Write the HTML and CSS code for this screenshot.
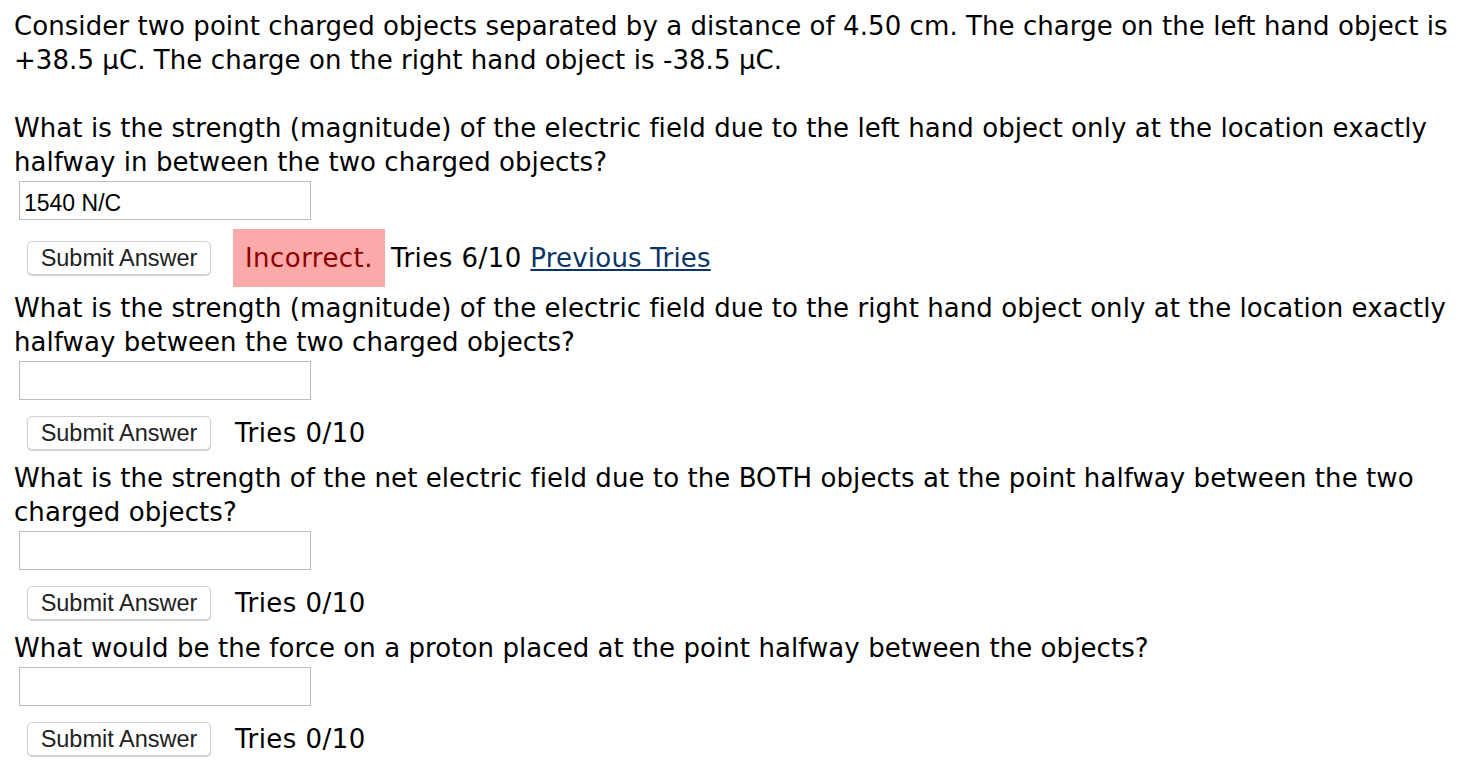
FILE: index.html
```html
<!DOCTYPE html>
<html>
<head>
<meta charset="utf-8">
<link rel="stylesheet" href="styles.css">
</head>
<body>
<div class="page">
  <div class="question">
    <p class="text">Consider two point charged objects separated by a distance of 4.50 cm. The charge on the left hand object is +38.5 μC. The charge on the right hand object is -38.5 μC.</p>
    <p class="text gap">What is the strength (magnitude) of the electric field due to the left hand object only at the location exactly halfway in between the two charged objects?</p>
    <input class="answer" type="text" value="1540 N/C">
    <div class="row">
      <button class="submit">Submit Answer</button>
      <span class="incorrect">Incorrect.</span>
      <span class="tries">Tries 6/10 <a href="#" class="prev">Previous Tries</a></span>
    </div>
  </div>
  <div class="question">
    <p class="text">What is the strength (magnitude) of the electric field due to the right hand object only at the location exactly halfway between the two charged objects?</p>
    <input class="answer" type="text" value="">
    <div class="row">
      <button class="submit">Submit Answer</button>
      <span class="tries solo">Tries 0/10</span>
    </div>
  </div>
  <div class="question">
    <p class="text">What is the strength of the net electric field due to the BOTH objects at the point halfway between the two charged objects?</p>
    <input class="answer" type="text" value="">
    <div class="row">
      <button class="submit">Submit Answer</button>
      <span class="tries solo">Tries 0/10</span>
    </div>
  </div>
  <div class="question">
    <p class="text">What would be the force on a proton placed at the point halfway between the objects?</p>
    <input class="answer" type="text" value="">
    <div class="row">
      <button class="submit">Submit Answer</button>
      <span class="tries solo">Tries 0/10</span>
    </div>
  </div>
</div>
</body>
</html>
```
FILE: styles.css
```css
html, body {
  margin: 0;
  padding: 0;
  background: #ffffff;
}
.page {
  padding: 9px 14px 0 14px;
  font-family: "DejaVu Sans", Verdana, sans-serif;
  font-size: 26px;
  letter-spacing: 0.07px;
  line-height: 34px;
  color: #000000;
}
.text {
  margin: 0;
}
.text.gap {
  margin-top: 34px;
}
.answer {
  display: block;
  box-sizing: border-box;
  width: 292px;
  height: 39px;
  margin: 2px 0 0 5px;
  padding: 5px 4px 0 4px;
  border: 1px solid #bdbdbd;
  font-family: "Liberation Sans", Arial, sans-serif;
  font-size: 23px;
  letter-spacing: 0;
  color: #000;
  background: #fff;
  outline: none;
}
.row {
  display: flex;
  align-items: center;
  min-height: 48px;
  padding: 9px 0 4px 0;
}
.submit {
  box-sizing: border-box;
  width: 184px;
  height: 34px;
  margin: 0 22px 0 13px;
  padding: 0;
  border: 1px solid #d0d0d0;
  border-radius: 5px;
  background: #ffffff;
  box-shadow: 0 1px 1px rgba(0,0,0,0.18);
  font-family: "Liberation Sans", Arial, sans-serif;
  font-size: 23.5px;
  letter-spacing: 0;
  color: #222;
}
.incorrect {
  display: flex;
  align-items: center;
  height: 58px;
  padding: 0 12px;
  background: #fca9a9;
  color: #8b0000;
  letter-spacing: 0.45px;
}
.tries {
  margin-left: 6px;
  white-space: nowrap;
  letter-spacing: 0.45px;
}
.tries.solo {
  margin-left: 2px;
}
.prev {
  color: #0a3566;
  text-decoration: underline;
  letter-spacing: 0.2px;
}
```
